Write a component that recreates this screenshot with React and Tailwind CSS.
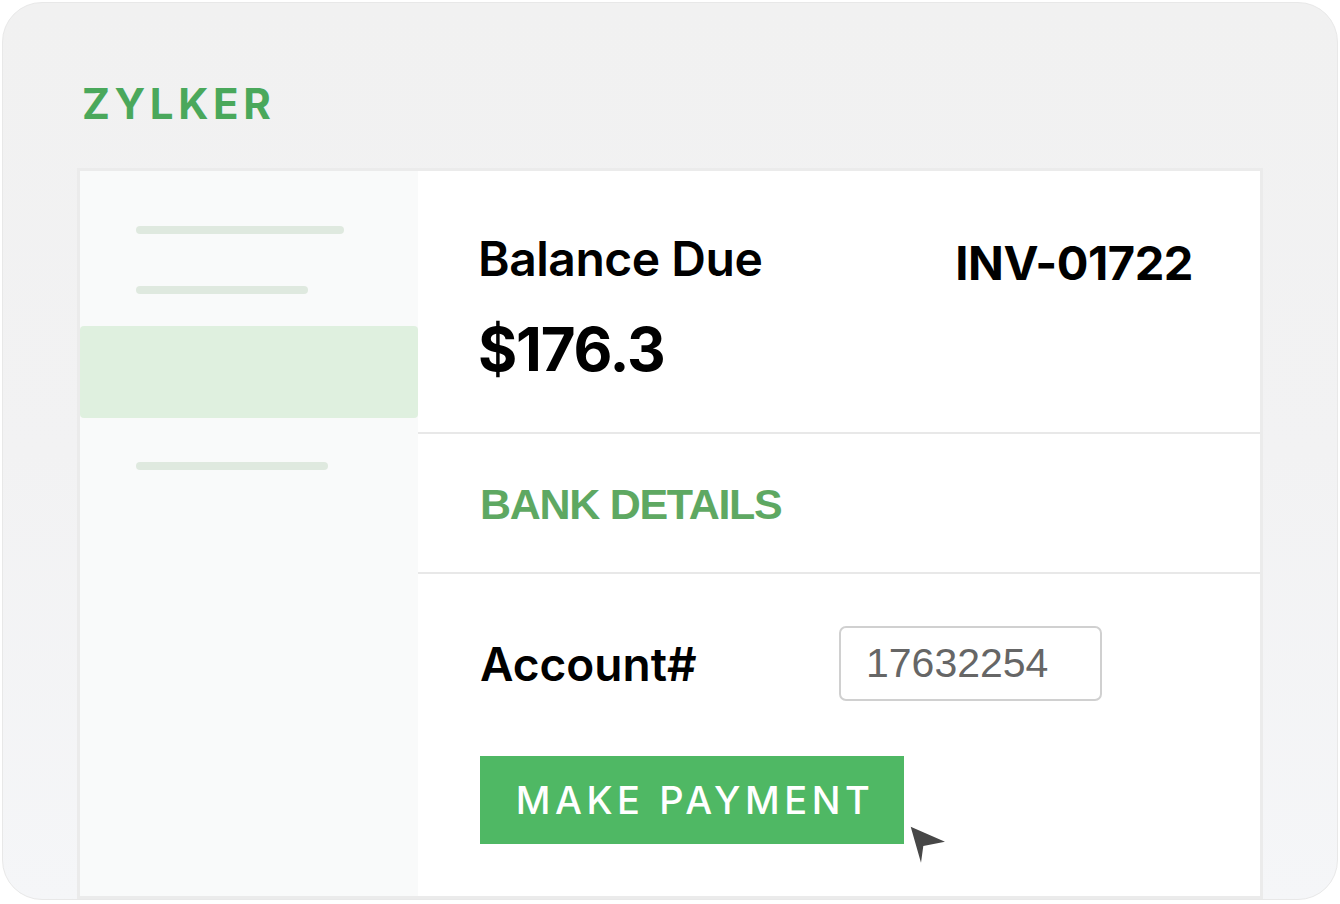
import React from "react";

const inter = { fontFamily: "Inter, 'Noto Sans', sans-serif" };

const SideLine = ({ className }) => (
  <div className={"h-2 rounded-full bg-[#dfe9df] " + className} />
);

const Cursor = () => (
  <svg
    className="absolute left-[426px] top-[68px]"
    width="42"
    height="42"
    viewBox="0 0 42 42"
  >
    <polygon points="4.7,2.7 39,17.7 17.3,22 15,38.7" fill="#474747" />
  </svg>
);

const App = () => {
  return (
    <div className="w-[1340px] h-[904px] bg-white p-[2px]">
      <div className="h-[898px] rounded-[40px] border border-[#e8e8e8] bg-gradient-to-b from-[#f1f1f1] via-[#f2f2f3] to-[#f5f6f8] pl-[74px] pr-[74px] flex flex-col overflow-hidden">
        {/* brand */}
        <header className="h-[165px] shrink-0 pt-[80px] pl-[5px]">
          <h1
            className="text-[42px] leading-none font-bold tracking-[0.11em] text-[#4aa85b]"
            style={inter}
          >
            ZYLKER
          </h1>
        </header>

        {/* invoice card */}
        <div className="flex-1 flex border-[3px] border-[#ebebeb] bg-white">
          <aside className="w-[338px] shrink-0 bg-[#f9fafa] pt-[55px]">
            <SideLine className="ml-[56px] w-[208px]" />
            <SideLine className="ml-[56px] w-[172px] mt-[52px]" />
            <div className="mt-[32px] h-[92px] rounded-[4px] bg-[#dff0df]" />
            <SideLine className="ml-[56px] w-[192px] mt-[44px]" />
          </aside>

          <main className="flex-1 flex flex-col" style={inter}>
            <section className="h-[263px] shrink-0 border-b-2 border-[#e8e8e8] pl-[60px] pr-[67px] pt-[64px]">
              <div className="flex justify-between items-start">
                <h2 className="text-[48px] leading-none font-semibold text-black tracking-[-0.01em]">
                  Balance Due
                </h2>
                <span className="mt-[4px] text-[47px] leading-none font-bold text-black tracking-[-0.01em]">
                  INV-01722
                </span>
              </div>
              <p className="mt-[33px] text-[60px] leading-none font-bold text-black tracking-[-0.02em]">
                $176.3
              </p>
            </section>

            <section className="h-[140px] shrink-0 border-b-2 border-[#e8e8e8] pl-[62px] pt-[49px]">
              <h3
                className="text-[43px] leading-none font-bold text-[#5ea862] tracking-[-0.03em]"
                style={{ fontFamily: "'Liberation Sans', Arial, sans-serif" }}
              >
                BANK DETAILS
              </h3>
            </section>

            <section className="pl-[62px] pt-[52px]">
              <div className="flex items-center">
                <span className="w-[359px] text-[46px] leading-none font-semibold text-black">
                  Account#
                </span>
                <div
                  className="w-[263px] h-[75px] rounded-[7px] border-2 border-[#d0d0d0] flex items-center pl-[25px] text-[41px] text-[#666666]"
                  style={{ fontFamily: "'Liberation Sans', Arial, sans-serif" }}
                >
                  17632254
                </div>
              </div>

              <div className="relative mt-[55px] w-[424px]">
                <button className="w-[424px] h-[88px] bg-[#4fb864] text-white text-[38px] font-medium tracking-[0.12em] flex items-center justify-center pl-[6px]">
                  MAKE PAYMENT
                </button>
                <Cursor />
              </div>
            </section>
          </main>
        </div>
      </div>
    </div>
  );
};

export default App;
